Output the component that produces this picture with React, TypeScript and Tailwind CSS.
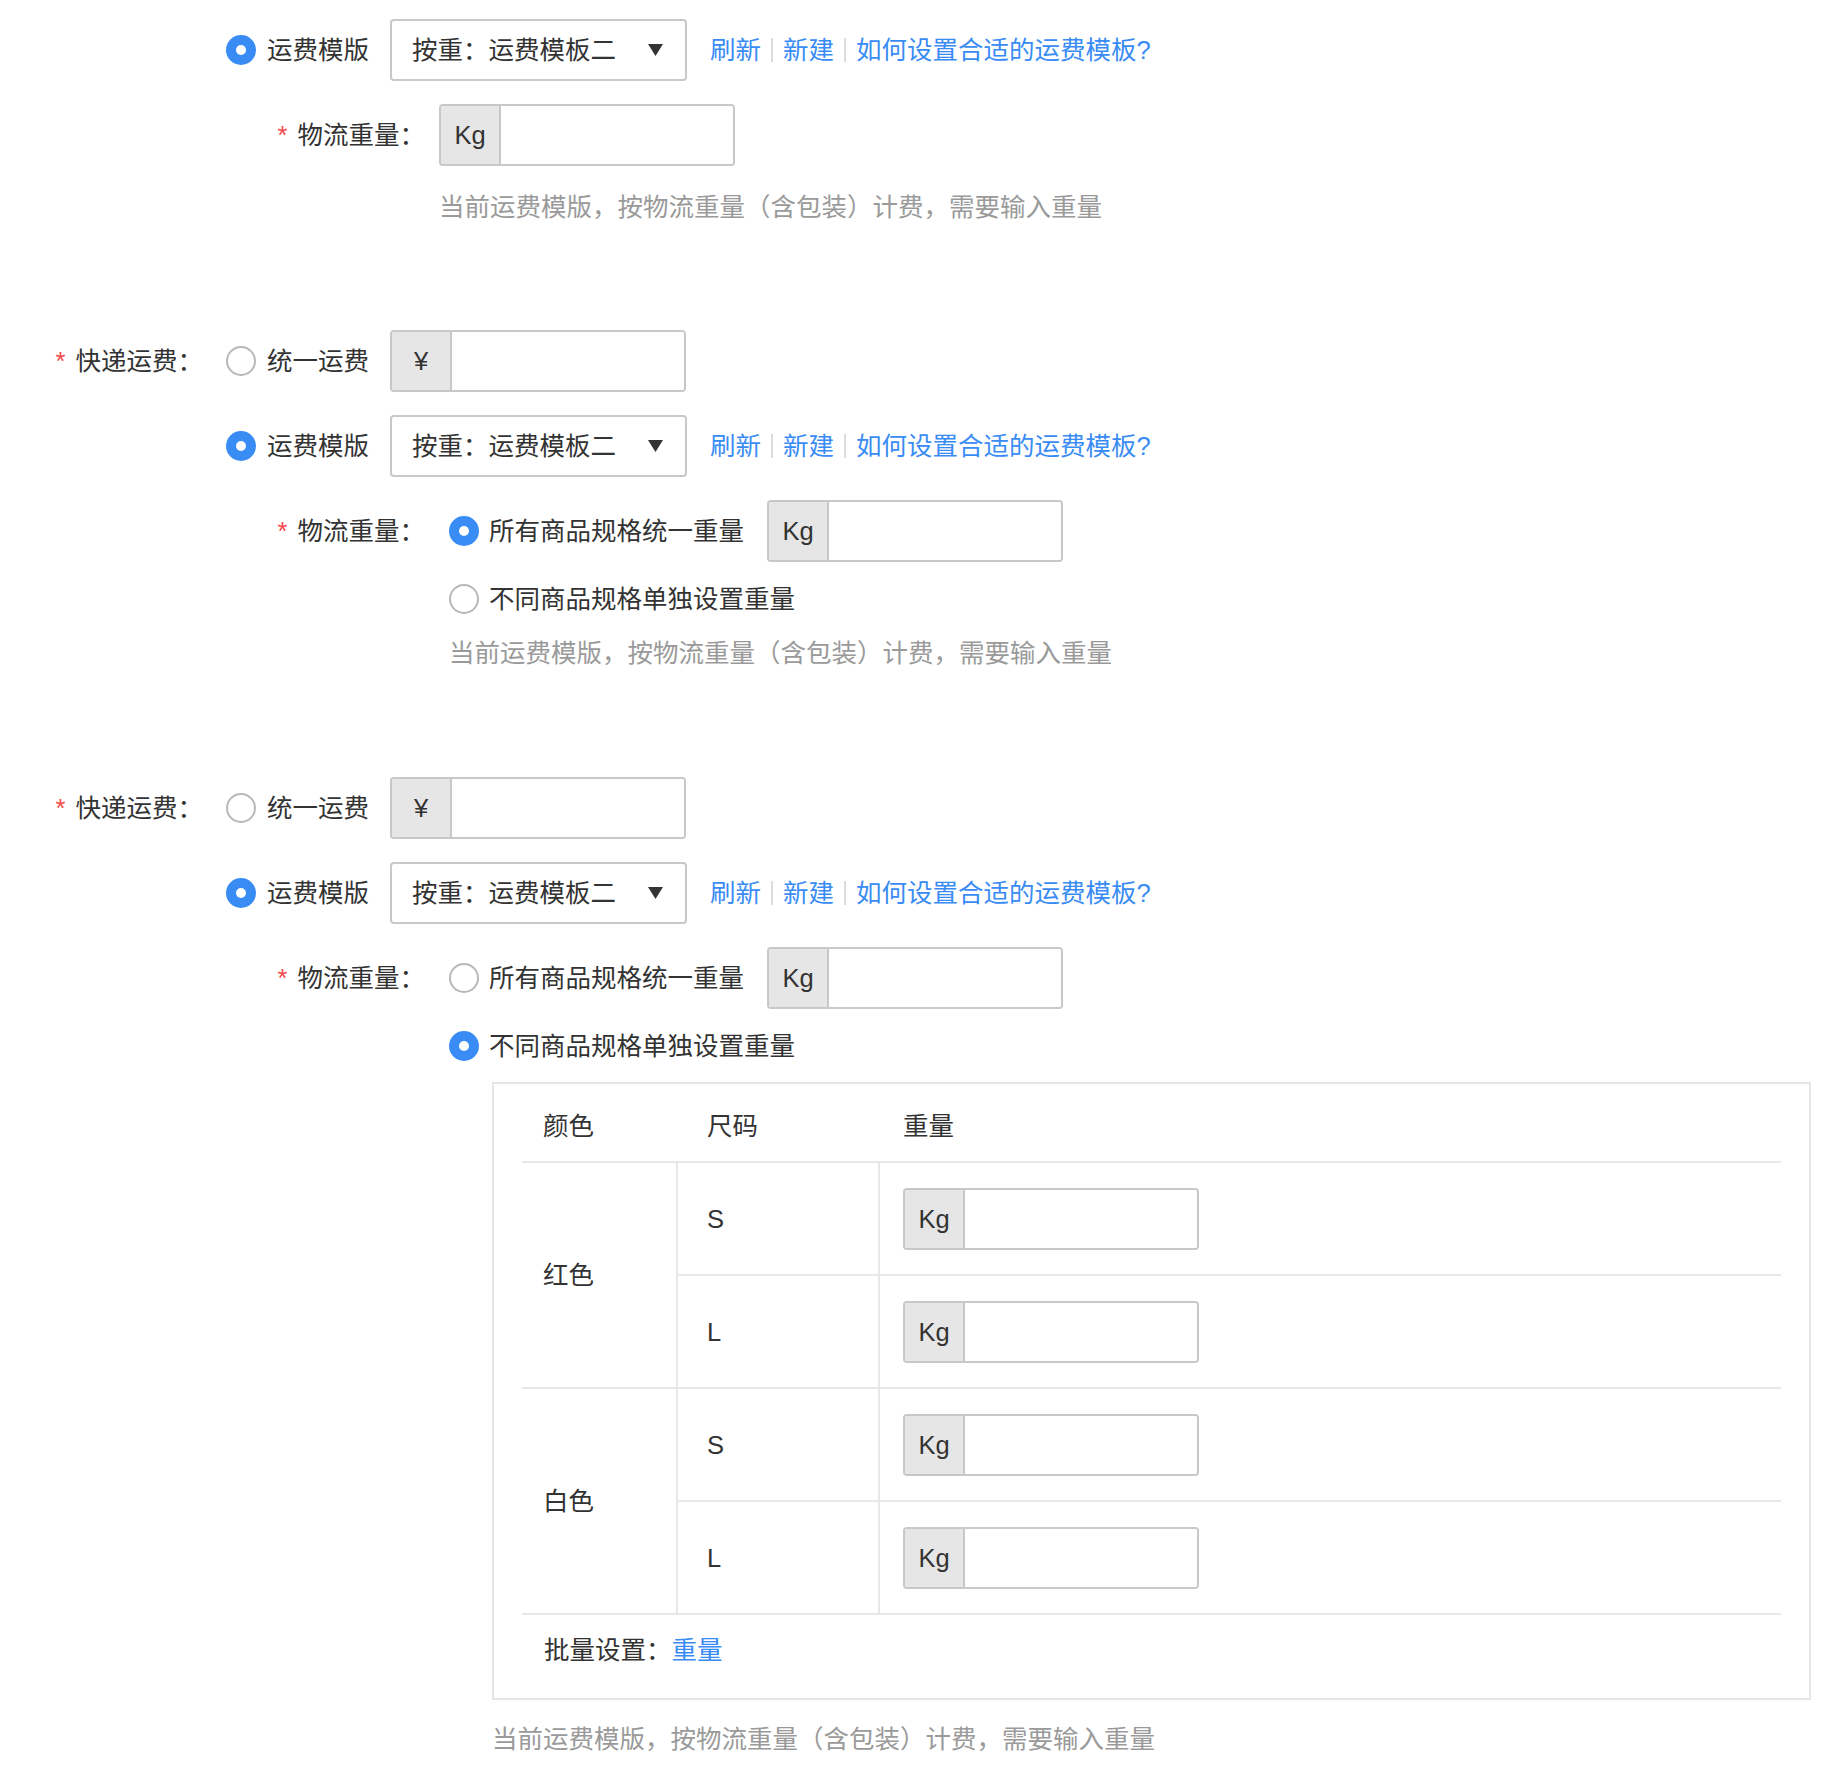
import { Fragment } from 'react';

const BLUE = 'text-[#3a8cf5]';

function Radio({ checked }: { checked?: boolean }) {
    if (checked) {
        return (
            <span className="flex h-[30px] w-[30px] shrink-0 items-center justify-center rounded-full bg-[#3a8cf5]">
                <span className="h-[10px] w-[10px] rounded-full bg-white" />
            </span>
        );
    }
    return <span className="h-[30px] w-[30px] shrink-0 rounded-full border-2 border-[#b8b8b8] bg-white" />;
}

function RadioOption({ checked, label, gap = 'gap-[11px]' }: { checked?: boolean; label: string; gap?: string }) {
    return (
        <label className={`flex shrink-0 items-center ${gap} text-[#333]`}>
            <Radio checked={checked} />
            <span>{label}</span>
        </label>
    );
}

function AddonInput({ unit }: { unit: string }) {
    return (
        <div className="flex h-[62px] w-[296px] shrink-0 overflow-hidden rounded-[4px] border-2 border-[#c8c8c8] bg-white">
            <span className="flex w-[60px] shrink-0 items-center justify-center border-r-2 border-[#c8c8c8] bg-[#e6e6e6] text-[#333]">
                {unit}
            </span>
            <input className="min-w-0 flex-1 bg-white outline-none" />
        </div>
    );
}

function TemplateSelect() {
    return (
        <div className="flex h-[62px] w-[297px] shrink-0 items-center justify-between rounded-[4px] border-2 border-[#c8c8c8] bg-white pl-[20px] pr-[22px] text-[#333]">
            <span>按重：运费模板二</span>
            <svg width="15" height="12" viewBox="0 0 15 12">
                <polygon points="0,0 15,0 7.5,12" fill="#333" />
            </svg>
        </div>
    );
}

function Links() {
    return (
        <div className={`ml-[23px] flex items-center ${BLUE}`}>
            <span>刷新</span>
            <span className="mx-[10px] h-[24px] w-[2px] bg-[#dcdcdc]" />
            <span>新建</span>
            <span className="mx-[10px] h-[24px] w-[2px] bg-[#dcdcdc]" />
            <span>如何设置合适的运费模板?</span>
        </div>
    );
}

function Star() {
    return <span className="mr-[10px] inline-block text-[#f5484a]">*</span>;
}

// label column + content column
function FormRow({ label, children }: { label?: string; children: React.ReactNode }) {
    return (
        <div className="flex items-start">
            <div className="flex h-[62px] w-[203px] shrink-0 items-center justify-end text-[#333]">
                {label && (
                    <>
                        <Star />
                        {label}
                    </>
                )}
            </div>
            <div className="ml-[23px] flex items-center">{children}</div>
        </div>
    );
}

function SubRow({ children }: { children: React.ReactNode }) {
    return (
        <div className="flex items-start">
            <div className="flex h-[62px] w-[199px] shrink-0 items-center justify-end text-[#333]">
                <Star />
                物流重量：
            </div>
            {children}
        </div>
    );
}

const HELP = '当前运费模版，按物流重量（含包装）计费，需要输入重量';

function TemplateRow() {
    return (
        <FormRow>
            <RadioOption checked label="运费模版" />
            <div className="ml-[21px]">
                <TemplateSelect />
            </div>
            <Links />
        </FormRow>
    );
}

function UnifiedRow() {
    return (
        <FormRow label="快递运费：">
            <RadioOption label="统一运费" />
            <div className="ml-[21px]">
                <AddonInput unit="¥" />
            </div>
        </FormRow>
    );
}

function WeightTable() {
    const groups = ['红色', '白色'];
    const sizes = ['S', 'L'];
    return (
        <div className="mt-[18px] ml-[43px] w-[1319px] border-2 border-[#e6e6e6] px-[28px] pt-[7px] pb-[13px] text-[#333]">
            <div className="grid h-[72px] grid-cols-[156px_202px_1fr] items-center border-b-2 border-[#e8e8e8]">
                <span className="pl-[21px]">颜色</span>
                <span className="pl-[29px]">尺码</span>
                <span className="pl-[23px]">重量</span>
            </div>
            <div className="grid grid-cols-[156px_202px_1fr]">
                {groups.map((g) => (
                    <Fragment key={g}>
                        <div className="row-span-2 flex items-center border-r-2 border-b-2 border-[#e8e8e8] pl-[21px]">{g}</div>
                        {sizes.map((s) => (
                            <Fragment key={s}>
                                <div className="flex h-[113px] items-center border-r-2 border-b-2 border-[#e8e8e8] pl-[29px]">{s}</div>
                                <div className="flex h-[113px] items-center border-b-2 border-[#e8e8e8] pl-[23px]">
                                    <AddonInput unit="Kg" />
                                </div>
                            </Fragment>
                        ))}
                    </Fragment>
                ))}
            </div>
            <div className="flex h-[70px] items-center pl-[22px]">
                <span>批量设置：</span>
                <span className={BLUE}>重量</span>
            </div>
        </div>
    );
}

export default function App() {
    return (
        <div className="min-h-[1774px] w-full bg-white pt-[19px] pb-[20px] font-['Liberation_Sans','Noto_Sans_CJK_SC',sans-serif] text-[25.5px] leading-[36px]">
            {/* --- section 1: template only --- */}
            <section className="flex flex-col">
                <TemplateRow />
                <div className="mt-[23px] ml-[226px]">
                    <SubRow>
                        <div className="ml-[14px] flex flex-col">
                            <AddonInput unit="Kg" />
                            <p className="mt-[23px] text-[#9a9a9a]">{HELP}</p>
                        </div>
                    </SubRow>
                </div>
            </section>

            {/* --- section 2: unified weight --- */}
            <section className="mt-[105px] flex flex-col gap-[23px]">
                <UnifiedRow />
                <TemplateRow />
                <div className="ml-[226px]">
                    <SubRow>
                        <div className="ml-[24px] flex flex-col">
                            <div className="flex items-center">
                                <RadioOption checked label="所有商品规格统一重量" gap="gap-[10px]" />
                                <div className="ml-[23px]">
                                    <AddonInput unit="Kg" />
                                </div>
                            </div>
                            <div className="mt-[19px]">
                                <RadioOption label="不同商品规格单独设置重量" gap="gap-[10px]" />
                            </div>
                            <p className="mt-[18px] text-[#9a9a9a]">{HELP}</p>
                        </div>
                    </SubRow>
                </div>
            </section>

            {/* --- section 3: per-spec weight table --- */}
            <section className="mt-[106px] flex flex-col gap-[23px]">
                <UnifiedRow />
                <TemplateRow />
                <div className="ml-[226px]">
                    <SubRow>
                        <div className="ml-[24px] flex flex-col">
                            <div className="flex items-center">
                                <RadioOption label="所有商品规格统一重量" gap="gap-[10px]" />
                                <div className="ml-[23px]">
                                    <AddonInput unit="Kg" />
                                </div>
                            </div>
                            <div className="mt-[19px]">
                                <RadioOption checked label="不同商品规格单独设置重量" gap="gap-[10px]" />
                            </div>
                            <WeightTable />
                            <p className="mt-[21px] ml-[43px] text-[#9a9a9a]">{HELP}</p>
                        </div>
                    </SubRow>
                </div>
            </section>
        </div>
    );
}
